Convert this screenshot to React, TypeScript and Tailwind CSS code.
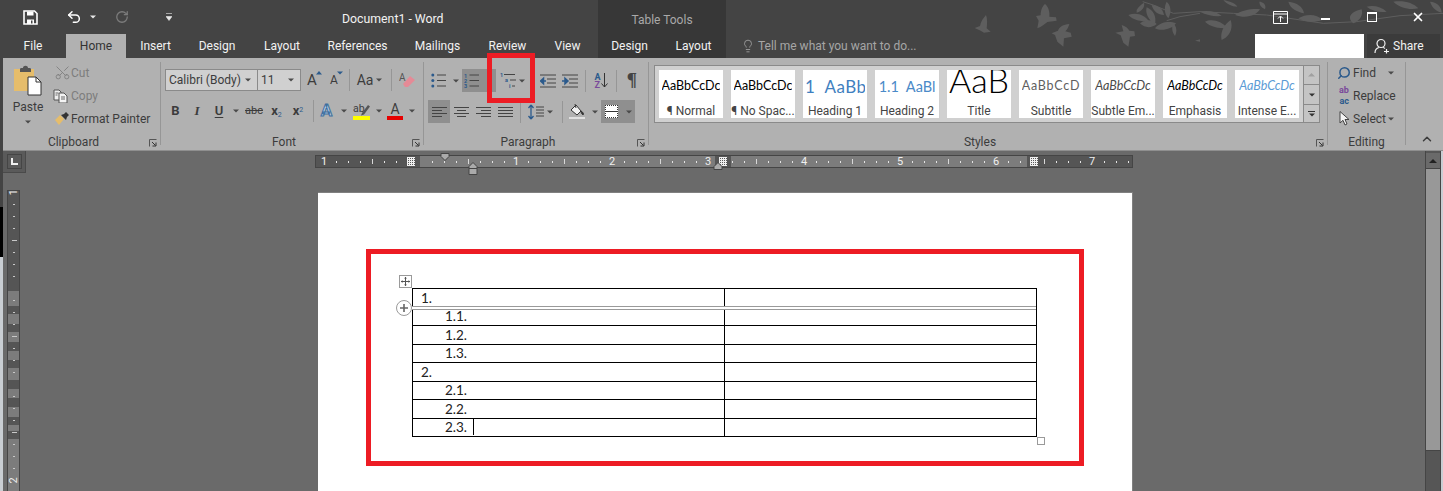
import { ReactNode } from 'react'
import { Lightbulb, RotateCw, Scissors, Undo2, X, Search, ChevronUp } from 'lucide-react'

const leftTabs = [
  { label: 'File', w: 'w-[66px]' },
  { label: 'Home', w: 'w-[60px]' },
  { label: 'Insert', w: 'w-[59px]' },
  { label: 'Design', w: 'w-[64px]' },
  { label: 'Layout', w: 'w-[66px]' },
  { label: 'References', w: 'w-[85px]' },
  { label: 'Mailings', w: 'w-[75px]' },
  { label: 'Review', w: 'w-[65px]' },
  { label: 'View', w: 'w-[55px]' },
]

const Caret = ({ color = '#4a4a4a' }: { color?: string }) => (
  <svg width="6" height="4" viewBox="0 0 6 4"><path d="M0 0.5h6L3 3.5z" fill={color} /></svg>
)

const Launcher = () => (
  <svg width="12" height="9" viewBox="0 0 12 9" className="shrink-0">
    <path d="M1.5 8.5v-7h7" fill="none" stroke="#555" />
    <path d="M4 4l3.5 3.5M8 4.5v3.5h-3.5" fill="none" stroke="#333" />
  </svg>
)

const Sep = ({ h = 'h-[22px]' }: { h?: string }) => <div className={'w-px bg-[#969696] ' + h} />

const Cell = ({ w, children, on }: { w: string; children?: ReactNode; on?: boolean }) => (
  <div className={'flex h-full items-center justify-center ' + w + (on ? ' bg-[#8f8f8f]' : '')}>{children}</div>
)

const Group = ({ w, label, launcher = true, children }: { w: string; label: string; launcher?: boolean; children: ReactNode }) => (
  <div className={'flex shrink-0 flex-col ' + w}>
    <div className="flex h-[76px] flex-col">{children}</div>
    <div className="flex h-[16px] items-center text-[12px] text-[#3c3c3c]">
      <span className={'flex-1 text-center' + (launcher ? ' pr-[4px]' : '')}>{label}</span>
      {launcher && <Launcher />}
    </div>
  </div>
)

const GroupSep = () => <div className="mt-[4px] h-[83px] w-px shrink-0 bg-[#969696]" />

const Bullets = () => (
  <svg width="15" height="15" viewBox="0 0 15 15">
    <circle cx="1.8" cy="2" r="1.5" fill="#2b5a8c" /><circle cx="1.8" cy="7.5" r="1.5" fill="#2b5a8c" /><circle cx="1.8" cy="13" r="1.5" fill="#2b5a8c" />
    <path d="M6 2h9M6 7.5h9M6 13h9" stroke="#444" />
  </svg>
)

const Numbers = () => (
  <svg width="15" height="15" viewBox="0 0 15 15">
    <text x="0" y="5" fontSize="5.5" fill="#2b5a8c" fontWeight="700" fontFamily="Roboto">1</text>
    <text x="0" y="10" fontSize="5.5" fill="#2b5a8c" fontWeight="700" fontFamily="Roboto">2</text>
    <text x="0" y="15" fontSize="5.5" fill="#2b5a8c" fontWeight="700" fontFamily="Roboto">3</text>
    <path d="M5.5 2h9.5M5.5 7.5h9.5M5.5 13h9.5" stroke="#444" />
  </svg>
)

const Multilevel = () => (
  <svg width="17" height="17" viewBox="0 0 17 17">
    <text x="0" y="5" fontSize="5.5" fill="#2b5a8c" fontWeight="700" fontFamily="Roboto">1</text>
    <text x="5" y="10" fontSize="5.5" fill="#2b5a8c" fontWeight="700" fontFamily="Roboto">a</text>
    <text x="9" y="16" fontSize="5.5" fill="#2b5a8c" fontWeight="700" fontFamily="Roboto">i</text>
    <path d="M4 2.5h11M10 8h6M12 14h3" stroke="#444" />
  </svg>
)

const IndentIcon = ({ flip }: { flip?: boolean }) => (
  <svg width="16" height="14" viewBox="0 0 16 14">
    <path d="M0 1h16M7 5h9M7 9h9M0 13h16" stroke="#444" />
    {flip
      ? <path d="M0 7h3.5M3 4.2l3 2.8-3 2.8z" stroke="#2b5a8c" fill="#2b5a8c" strokeWidth="1.5" />
      : <path d="M6 7h-3M3.5 4.2l-3 2.8 3 2.8z" stroke="#2b5a8c" fill="#2b5a8c" strokeWidth="1.5" />}
  </svg>
)

const Align = ({ d }: { d: string }) => (
  <svg width="15" height="12" viewBox="0 0 15 12"><path d={d} stroke="#444" fill="none" /></svg>
)

const styleItems = [
  { label: '¶ Normal', text: 'AaBbCcDc', cls: 'text-[12.5px] text-black' },
  { label: '¶ No Spac...', text: 'AaBbCcDc', cls: 'text-[12.5px] text-black' },
  { label: 'Heading 1', text: '1  AaBb', cls: 'text-[17px] text-[#3f7fbf] tracking-[0.5px]' },
  { label: 'Heading 2', text: '1.1  AaBl', cls: 'text-[14.5px] text-[#4a8ac8]' },
  { label: 'Title', text: 'AaB', cls: 'text-[34px] text-black leading-[26px] -mt-[14px] font-light' },
  { label: 'Subtitle', text: 'AaBbCcD', cls: 'text-[12.5px] text-[#5f5f5f] tracking-[0.8px]' },
  { label: 'Subtle Em...', text: 'AaBbCcDc', cls: 'text-[12.5px] italic text-[#4a4a4a]' },
  { label: 'Emphasis', text: 'AaBbCcDc', cls: 'text-[12.5px] italic text-black' },
  { label: 'Intense E...', text: 'AaBbCcDc', cls: 'text-[12.5px] italic text-[#5b9bd5]' },
]

const rulerCells = Array.from({ length: 68 }, (_, i) => i - 8)

const RulerMark = ({ k }: { k: number }) => {
  if (k === 0) return null
  if (k % 8 === 0) return <span className="text-[11px] leading-none text-[#f0f0f0]">{Math.abs(k / 8)}</span>
  if (k % 4 === 0) return <div className="h-[5px] w-px bg-[#d8d8d8]" />
  return <div className="h-[2px] w-px bg-[#e4e4e4]" />
}

const GridMark = () => (
  <svg width="8" height="9" viewBox="0 0 8 9" shapeRendering="crispEdges">
    <rect width="8" height="9" fill="#5a5a5a" />
    <path d="M.5 0v9M2.5 0v9M4.5 0v9M6.5 0v9M0 .5h8M0 2.5h8M0 4.5h8M0 6.5h8M0 8.5h8" stroke="#f0f0f0" />
  </svg>
)

const vSegments = [
  { h: 'h-[100px]', on: false }, { h: 'h-[15px]', on: true }, { h: 'h-[8px]', on: false }, { h: 'h-[10px]', on: true },
  { h: 'h-[8px]', on: false }, { h: 'h-[10px]', on: true }, { h: 'h-[9px]', on: false }, { h: 'h-[9px]', on: true },
  { h: 'h-[8px]', on: false }, { h: 'h-[12px]', on: true }, { h: 'h-[9px]', on: false }, { h: 'h-[9px]', on: true },
  { h: 'h-[9px]', on: false }, { h: 'h-[10px]', on: true }, { h: 'h-[8px]', on: false }, { h: 'h-[6px]', on: true },
  { h: 'h-[8px]', on: false }, { h: 'h-[53px]', on: true },
]

const rows = [
  { n: '1.', sub: false, h: 'h-[19px]' },
  { n: '1.1.', sub: true, h: 'h-[18px]' },
  { n: '1.2.', sub: true, h: 'h-[19px]' },
  { n: '1.3.', sub: true, h: 'h-[18px]' },
  { n: '2.', sub: false, h: 'h-[19px]' },
  { n: '2.1.', sub: true, h: 'h-[18px]' },
  { n: '2.2.', sub: true, h: 'h-[19px]' },
  { n: '2.3.', sub: true, h: 'h-[18px]' },
]

// birds and branch in the title bar, drawn in 3x units
const Decor = () => (
  <svg width="483" height="58" viewBox="0 0 1449 174" className="pointer-events-none absolute right-0 top-0" fill="#5e5e5e">
    <path d="M78 45C70 55 62 65 60 78L44 84l18 8 10 6 20-3-12-10C82 70 82 55 78 45z" />
    <path d="M255 12C245 20 242 35 242 46l-14 2 8 14-4 23c13-5 23-13 30-19l28-4-2-10-20-2C270 35 265 20 255 12z" />
    <path d="M328 72C310 74 298 80 294 92l-19 8 10 5 7 20 18 15 2-25 23-5-3-12-16-4C322 88 326 80 328 72z" />
    <path d="M485 75l5 19-24 4 16 8 8 22 15 12 5-30 15-2-2-14-15-2C505 85 495 78 485 75z" />
    <path d="M505 45c25-10 50 0 63 20-28 0-48-5-63-20zM530 30c5-10 15-18 22-22 3 12-4 24-22 30zM540 70c20-15 40-10 50 2-15 13-35 13-50-2zM560 22c20 8 30 28 25 50-20-12-30-32-25-50zM575 15c20 0 35 13 37 30-17 0-32-10-37-30zM620 5c12 10 16 30 5 50-13-15-13-35-5-50zM585 85c15-20 45-23 63-15-13 18-43 25-63 15zM640 70c10 10 12 25 5 38-10-13-10-28-5-38zM705 122l15 3v-7z" />
    <path d="M548 5l32 10 60 25 80-5M620 62l40-12 60-10" fill="none" stroke="#5e5e5e" strokeWidth="3" />
    <g transform="translate(720)">
      <path d="M70 0c20 5 35 8 42 20-17 0-32-8-42-20zM105 45c20-15 55-20 75-17-10 17-40 30-75 17zM178 5c12 0 22 10 17 23-12-6-17-13-17-23zM65 120c-5-20 5-45 27-60 8 25-2 50-27 60zM15 65c20-10 50-3 67 20-27 0-52-5-67-20zM0 35c25-5 50 0 65 13-25 2-45-3-65-13zM265 5c25 3 45 15 47 35-22-5-42-15-47-35zM295 55c25-15 55-13 73 5-23 8-53 8-73-5zM460 70c-20-15-10-35 25-42 5 17-5 34-25 42zM580 5c30-5 60 3 75 20-25 5-55 0-75-20zM690 5c20 0 35 15 35 33-20-6-30-18-35-33zM500 20c20-5 45 0 60 15-25 3-45-3-60-15z" />
      <path d="M0 35l100 5 100 5 170 25 100-5 130-18 130-7" fill="none" stroke="#5e5e5e" strokeWidth="3" />
    </g>
  </svg>
)

export default function App() {
  return (
    <div className="relative flex h-[491px] w-[1443px] flex-col overflow-hidden bg-[#444444] font-['Roboto',sans-serif] text-[12px]">
      {/* title bar + tabs */}
      <div className="relative flex h-[58px] shrink-0 text-[#f2f2f2]">
        <Decor />
        <div className="relative w-[598px] shrink-0">
          <div className="flex h-[34px] items-center">
            <svg width="15" height="15" viewBox="0 0 15 15" className="ml-[23px]">
              <path d="M1 1h10.5L14 3.5V14H1z" fill="none" stroke="#fff" strokeWidth="1.6" />
              <path d="M4 1.5h6.5v4H4zM4 9.5h7V14H4z" fill="#fff" />
              <path d="M8 10.5h1.5v3H8z" fill="#444" />
            </svg>
            <Undo2 size={16} strokeWidth={2.2} className="ml-[28px] text-white" />
            <div className="ml-[8px]"><Caret color="#e8e8e8" /></div>
            <RotateCw size={14} strokeWidth={2.2} className="ml-[19px] text-[#7c7c7c]" />
            <svg width="6" height="8" viewBox="0 0 6 8" className="ml-[37px]"><path d="M0 0.5h6M0 3.5h6L3 7.5z" stroke="#e8e8e8" fill="#e8e8e8" strokeWidth="0.6" /></svg>
            <span className="ml-[170px] mt-[5px] text-[12.3px] leading-none">Document1 - Word</span>
          </div>
          <div className="flex h-[24px]">
            {leftTabs.map((t) => (
              <div
                key={t.label}
                className={'flex items-center justify-center ' + t.w + (t.label === 'Home' ? ' bg-[#b1b1b1] text-[#333333]' : '')}
              >
                {t.label}
              </div>
            ))}
          </div>
        </div>
        <div className="relative w-[128px] shrink-0 bg-[#373737]">
          <div className="flex h-[34px] items-center justify-center pt-[5px] text-[#a9a9a9]">Table Tools</div>
          <div className="flex h-[24px]">
            <div className="flex w-[63px] items-center justify-center">Design</div>
            <div className="flex w-[65px] items-center justify-center">Layout</div>
          </div>
        </div>
        <div className="relative flex-1">
          <div className="flex h-[34px] items-center">
            <svg width="15" height="13" viewBox="0 0 15 13" className="ml-[547px]">
              <path d="M0.5 0.5h14v12h-14zM0.5 3h14" stroke="#fff" fill="none" />
              <path d="M7.5 11V5.5M5 7.5l2.5-2.5 2.5 2.5" stroke="#fff" fill="none" />
            </svg>
            <div className="ml-[33px] mt-[3px] h-[2px] w-[9px] bg-white" />
            <div className="ml-[37px] h-[10px] w-[10px] border border-t-2 border-white" />
            <X size={14} strokeWidth={3} className="ml-[34px] text-white" />
          </div>
          <div className="flex h-[24px]">
            <div className="flex w-[529px] items-center text-[#a6a6a6]">
              <Lightbulb size={14} strokeWidth={1.4} className="ml-[15px]" />
              <span className="ml-[3px]">Tell me what you want to do...</span>
            </div>
            <div className="w-[109px] bg-white" />
            <div className="ml-[3px] flex w-[73px] items-center bg-[#3b3b3b]">
              <svg width="16" height="16" viewBox="0 0 16 16" className="ml-[7px]">
                <circle cx="7" cy="5.5" r="4" fill="none" stroke="#f2f2f2" strokeWidth="1.2" />
                <path d="M1 15c0-3 2-5 4-5.500M9 9.5c.8.2 1.5.5 2 1M12.5 11v4.500M10 13.5h5" stroke="#f2f2f2" strokeWidth="1.2" fill="none" />
              </svg>
              <span className="ml-[3px]">Share</span>
            </div>
          </div>
        </div>
      </div>

      {/* ribbon */}
      <div className="ml-[3px] flex h-[93px] shrink-0 border-b border-[#8f8f8f] bg-[#b1b1b1] text-[#3c3c3c]">
        <Group w="w-[157px]" label="Clipboard">
          <div className="flex">
            <div className="ml-[7px] flex w-[36px] flex-col items-center pt-[7px]">
              <svg width="30" height="31" viewBox="0 0 30 31">
                <path d="M1 4h20v22H1z" fill="#e6bd6b" />
                <path d="M7 4c0-1 1-1 2-1h1c0-3 5-3 5 0h1c1 0 2 0 2 1v3H7z" fill="#555" />
                <path d="M15 12h8l5 5v13H15z" fill="#fff" stroke="#333" />
                <path d="M23 12v5h5" fill="none" stroke="#333" />
              </svg>
              <span className="mt-[3px] leading-[16px]">Paste</span>
              <div className="mt-[5px]"><Caret /></div>
            </div>
            <div className="ml-[7px] mt-[3px] flex flex-col">
              <div className="flex h-[23px] items-center text-[#7d7d7d]">
                <div className="flex w-[18px] justify-center"><Scissors size={17} strokeWidth={1.2} className="-rotate-90" /></div>
                <span>Cut</span>
              </div>
              <div className="flex h-[23px] items-center text-[#7d7d7d]">
                <div className="flex w-[18px] justify-start">
                  <svg width="15" height="14" viewBox="0 0 15 14">
                    <path d="M1 1h5l2 2v8H1z" fill="#eee" stroke="#555" />
                    <path d="M6 4h5l3 3v7H6z" fill="#f4f4f4" stroke="#555" />
                    <path d="M2.5 4h3M2.5 6h2M8 8h4M8 10h4" stroke="#666" />
                  </svg>
                </div>
                <span>Copy</span>
              </div>
              <div className="flex h-[23px] items-center">
                <div className="flex w-[18px] justify-center">
                  <svg width="16" height="14" viewBox="0 0 16 14">
                    <path d="M1 8l5-5 4 4-5 6z" fill="#e6bd6b" />
                    <path d="M7 3l3-1 2-2 3 3-2 2-1 3z" fill="#333" />
                  </svg>
                </div>
                <span className="whitespace-nowrap">Format Painter</span>
              </div>
            </div>
          </div>
        </Group>
        <GroupSep />
        <Group w="w-[262px]" label="Font">
          <div className="ml-[4px] mt-[11px] flex h-[22px] items-center">
            <div className="flex h-[22px] w-[93px] items-center justify-between border border-[#8a8a8a] bg-[#d0d0d0] pl-[3px] pr-[6px]">
              <span className="whitespace-nowrap">Calibri (Body)</span><Caret />
            </div>
            <div className="flex h-[22px] w-[43px] items-center justify-between border border-l-0 border-[#8a8a8a] bg-[#d0d0d0] pl-[3px] pr-[6px] text-[12px]">
              <span>11</span><Caret />
            </div>
            <Cell w="w-[22px]">
              <span className="relative text-[15px]">A<svg width="6" height="4" viewBox="0 0 6 4" className="absolute -right-[5px] top-[2px]"><path d="M0 3.5h6L3 0z" fill="#2b5a8c" /></svg></span>
            </Cell>
            <Cell w="w-[22px]">
              <span className="relative text-[12px]">A<svg width="6" height="4" viewBox="0 0 6 4" className="absolute -right-[5px] top-[0px]"><path d="M0 0.5h6L3 3.5z" fill="#2b5a8c" /></svg></span>
            </Cell>
            <Cell w="w-[4px]" />
            <Sep />
            <Cell w="w-[26px]"><span className="ml-[4px] text-[14px]">Aa</span></Cell>
            <Cell w="w-[6px]"><Caret /></Cell>
            <Cell w="w-[9px]" />
            <Sep />
            <Cell w="w-[30px]">
              <svg width="16" height="16" viewBox="0 0 16 16">
                <text x="0" y="9" fontSize="10" fill="#555" fontFamily="Roboto">A</text>
                <path d="M4 12l7-8 5 4-7 7H6z" fill="#e58a96" />
              </svg>
            </Cell>
          </div>
          <div className="ml-[4px] mt-[9px] flex h-[22px] items-center">
            <Cell w="w-[21px]"><b className="text-[13px]">B</b></Cell>
            <Cell w="w-[22px]"><i className="font-['Liberation_Serif',serif] text-[13px] font-bold">I</i></Cell>
            <Cell w="w-[22px]"><b className="text-[13px] font-semibold underline underline-offset-2">U</b></Cell>
            <Cell w="w-[12px]"><Caret /></Cell>
            <Cell w="w-[24px]"><span className="text-[11px] line-through">abc</span></Cell>
            <Cell w="w-[21px]"><b className="text-[13px]">x<sub className="text-[7px] font-normal text-[#2b5a8c]">2</sub></b></Cell>
            <Cell w="w-[22px]"><b className="text-[13px]">x<sup className="text-[7px] font-normal text-[#2b5a8c]">2</sup></b></Cell>
            <Cell w="w-[4px]" />
            <Sep />
            <Cell w="w-[25px]"><span className="text-[17px] font-bold text-[#b9cfe6] [-webkit-text-stroke:1px_#3f6f9f]">A</span></Cell>
            <Cell w="w-[10px]"><Caret /></Cell>
            <Cell w="w-[24px]">
              <svg width="17" height="18" viewBox="0 0 17 18">
                <text x="0" y="10" fontSize="10.5" fill="#3c3c3c" fontFamily="Roboto">ab</text>
                <path d="M9 11l6-8 2 1.5-6 8-3 1z" fill="#555" />
                <rect y="14" width="17" height="4" fill="#ffff00" />
              </svg>
            </Cell>
            <Cell w="w-[12px]"><Caret /></Cell>
            <Cell w="w-[20px]">
              <div className="flex flex-col items-center">
                <span className="text-[14px] leading-[13px]">A</span>
                <div className="h-[4px] w-[16px] bg-[#e60000]" />
              </div>
            </Cell>
            <Cell w="w-[14px]"><Caret /></Cell>
          </div>
        </Group>
        <GroupSep />
        <Group w="w-[224px]" label="Paragraph">
          <div className="ml-[4px] mt-[11px] flex h-[23px] items-center">
            <Cell w="w-[21px]"><Bullets /></Cell>
            <Cell w="w-[13px]"><Caret /></Cell>
            <Cell w="w-[34px]" on><div className="mr-[15px]"><Numbers /></div></Cell>
            <Cell w="w-[22px]"><div className="ml-[2px]"><Multilevel /></div></Cell>
            <Cell w="w-[8px]"><Caret /></Cell>
            <Cell w="w-[14px]" />
            <IndentIcon />
            <Cell w="w-[6px]" />
            <IndentIcon flip />
            <Cell w="w-[7px]" />
            <Sep />
            <Cell w="w-[30px]"><span className="flex items-center">
              <span className="flex flex-col text-[9px] font-bold leading-[8px]"><span className="text-[#2b5a8c]">A</span><span className="text-[#7a4a9a]">Z</span></span>
              <svg width="7" height="15" viewBox="0 0 7 15"><path d="M3.5 0v14M0.5 10.5l3 3.5 3-3.5" fill="none" stroke="#333" /></svg>
            </span></Cell>
            <Sep />
            <Cell w="w-[30px]"><span className="font-['Liberation_Serif',serif] text-[19px] font-bold text-[#444]">¶</span></Cell>
          </div>
          <div className="ml-[4px] mt-[8px] flex h-[23px] items-center">
            <Cell w="w-[22px]" on><Align d="M0 1.5h15M0 4.5h10M0 7.5h15M0 10.5h10" /></Cell>
            <Cell w="w-[22px]"><Align d="M0 1.5h15M3 4.5h9M0 7.5h15M3 10.5h9" /></Cell>
            <Cell w="w-[22px]"><Align d="M0 1.5h15M5 4.5h10M0 7.5h15M5 10.5h10" /></Cell>
            <Cell w="w-[22px]"><Align d="M0 1.5h15M0 4.5h15M0 7.5h15M0 10.5h15" /></Cell>
            <Cell w="w-[4px]" />
            <Sep />
            <Cell w="w-[24px]">
              <svg width="16" height="16" viewBox="0 0 16 16" className="ml-[5px]">
                <path d="M3 1l-2.5 3M3 1l2.5 3M3 1v14M3 15l-2.5-3M3 15l2.5-3" stroke="#2b5a8c" fill="none" strokeWidth="1.3" />
                <path d="M8 3h8M8 6h8M8 9h8M8 12h8" stroke="#444" />
              </svg>
            </Cell>
            <Cell w="w-[10px]"><Caret /></Cell>
            <Cell w="w-[7px]" />
            <Sep />
            <Cell w="w-[28px]">
              <svg width="16" height="17" viewBox="0 0 16 17">
                <path d="M2 7l5-5 5 6-4 4z" fill="#f2f2f2" stroke="#333" />
                <path d="M6 1l1 4M12 8c2 1 3 3 2 4-1-1-2-2-2-4z" stroke="#333" fill="#333" />
                <rect y="14" width="16" height="2" fill="#e0e0e0" />
              </svg>
            </Cell>
            <Cell w="w-[7px]"><Caret /></Cell>
            <Cell w="w-[3px]" />
            <Cell w="w-[34px]" on>
              <div className="mr-[8px] flex h-[13px] w-[13px] items-center justify-center bg-white">
                <div className="h-[13px] w-[13px] border border-dotted border-[#333] bg-[linear-gradient(#333,#333)] bg-[length:100%_1px] bg-center bg-no-repeat" />
              </div>
              <Caret />
            </Cell>
          </div>
        </Group>
        <GroupSep />
        <Group w="w-[678px]" label="Styles">
          <div className="ml-[5px] mt-[7px] flex h-[58px]">
            <div className="flex h-[58px] w-[650px] gap-[8px] border border-[#8a8a8a] bg-[#d0d0d0] py-[4px] pl-[4px]">
              {styleItems.map((s) => (
                <div key={s.label} className="flex h-[48px] w-[64px] shrink-0 flex-col overflow-hidden bg-white">
                  <div className="flex h-[33px] items-center justify-center overflow-hidden whitespace-nowrap px-[2px] font-['Lato',sans-serif]">
                    <span className={'block overflow-hidden whitespace-pre ' + s.cls}>{s.text}</span>
                  </div>
                  <div className="flex h-[15px] items-center justify-center whitespace-nowrap text-[12px] leading-none text-[#444]">{s.label}</div>
                </div>
              ))}
            </div>
            <div className="flex w-[16px] flex-col border border-l-0 border-[#8a8a8a] bg-[#c4c4c4]">
              <div className="flex h-[19px] items-center justify-center border-b border-[#8a8a8a]"><svg width="7" height="4" viewBox="0 0 7 4"><path d="M0 3.5h7L3.5 0z" fill="#a0a0a0" /></svg></div>
              <div className="flex h-[20px] items-center justify-center border-b border-[#8a8a8a]"><Caret color="#333" /></div>
              <div className="flex flex-1 flex-col items-center justify-center gap-[1px]"><div className="h-px w-[7px] bg-[#333]" /><Caret color="#333" /></div>
            </div>
          </div>
        </Group>
        <GroupSep />
        <Group w="w-[77px]" label="Editing" launcher={false}>
          <div className="ml-[7px] mt-[3px] flex flex-col">
            <div className="flex h-[23px] items-center">
              <div className="flex w-[18px] justify-center"><Search size={14} strokeWidth={2.6} className="-scale-x-100 text-[#2b5a8c]" /></div>
              <span>Find</span>
              <div className="ml-[12px]"><Caret /></div>
            </div>
            <div className="flex h-[23px] items-center">
              <div className="flex w-[18px] justify-center text-[9px] font-bold leading-[10.5px] text-[#2b5a8c]">
                <span className="flex flex-col items-end"><span className="text-[#7a4a9a]">ab</span><span>ac</span></span>
              </div>
              <span>Replace</span>
            </div>
            <div className="flex h-[23px] items-center">
              <div className="flex w-[18px] justify-center">
                <svg width="11" height="15" viewBox="0 0 11 15"><path d="M1 .5v11.5l3-2.7 2 4.7 2-1-2-4.5h4z" fill="#f4f4f4" stroke="#444" /></svg>
              </div>
              <span>Select</span>
              <div className="ml-[2px]"><Caret /></div>
            </div>
          </div>
        </Group>
        <GroupSep />
        <div className="flex flex-1 items-end justify-center pb-[1px] pr-[2px]"><ChevronUp size={14} strokeWidth={2.5} className="mb-[3px] ml-[6px] text-[#3c3c3c]" /></div>
      </div>

      {/* document area */}
      <div className="flex min-h-0 flex-1 bg-[#6a6a6a]">
        <div className="flex w-[3px] shrink-0 flex-col bg-[#c9ced3]">
          <div className="h-[56px] bg-[#444]" />
          <div className="h-[50px] bg-black" />
        </div>
        <div className="w-[312px] shrink-0">
          <div className="flex h-[22px] w-[23px] items-center justify-center border-b border-r border-[#4a4a4a] bg-[#5a5a5a]">
            <div className="flex h-[15px] w-[15px] items-center justify-center border border-[#454545]">
              <div className="mb-[1px] h-[7px] w-[7px] border-b-2 border-l-2 border-[#f0f0f0]" />
            </div>
          </div>
          <div className="relative ml-[4px] mt-[17px] w-[13px] overflow-hidden border-x border-t border-[#454545]">
            {vSegments.map((s, i) => (
              <div key={i} className={s.h + (s.on ? ' bg-[#7c7c7c]' : ' bg-[#555555]')} />
            ))}
            <div className="absolute -top-[5px] left-0 flex w-full flex-col">
              {Array.from({ length: 25 }, (_, k) => (
                <div key={k} className="flex h-[12px] items-center justify-center">
                  {k === 0 || k === 24 ? (
                    <span className="-rotate-90 text-[11px] leading-none text-[#f0f0f0]">{k === 0 ? 1 : 2}</span>
                  ) : k % 8 === 4 ? (
                    <div className="ml-[1px] h-px w-[5px] bg-[#c8c8c8]" />
                  ) : k % 8 === 0 ? null : (
                    <div className="ml-[1px] h-px w-[2px] bg-[#c8c8c8]" />
                  )}
                </div>
              ))}
            </div>
          </div>
        </div>

        <div className="flex w-[818px] shrink-0 flex-col pt-[4px]">
          <div className="relative h-[13px] w-[818px] border border-[#454545]">
            <div className="flex h-full">
              <div className="w-[104px] bg-[#555555]" />
              <div className="w-[295px] bg-[#7c7c7c]" />
              <div className="w-[16px] bg-[#555555]" />
              <div className="w-[296px] bg-[#7c7c7c]" />
              <div className="flex-1 bg-[#555555]" />
            </div>
            <div className="absolute left-[2px] top-0 flex h-full">
              {rulerCells.map((k) => (
                <div key={k} className="flex h-full w-[12px] items-center justify-center"><RulerMark k={k} /></div>
              ))}
            </div>
            <div className="absolute left-[91px] top-[1px]"><GridMark /></div>
            <div className="absolute left-[403px] top-[1px]"><GridMark /></div>
            <div className="absolute left-[714px] top-[1px]"><GridMark /></div>
            <svg width="10" height="8" viewBox="0 0 10 8" className="absolute left-[124px] -top-[3px]"><path d="M1 .5h8v3L5 7.5 1 3.5z" fill="#aaa" stroke="#444" /></svg>
            <svg width="10" height="13" viewBox="0 0 10 13" className="absolute left-[152px] top-[6px]"><path d="M1 4.5L5 .5l4 4v2H1z" fill="#aaa" stroke="#444" /><path d="M1 6.5h8v6H1z" fill="#aaa" stroke="#444" /></svg>
            <svg width="10" height="8" viewBox="0 0 10 8" className="absolute left-[397px] top-[6px]"><path d="M1 7.5v-3L5 .5l4 4v3z" fill="#aaa" stroke="#444" /></svg>
          </div>
          <div className="relative ml-[3px] mt-[24px] flex-1 border-r border-t border-[#808080] bg-white pl-[94px] pt-[95px]">
            <table className="w-[624px] table-fixed border-collapse font-['Lato',sans-serif] text-[13.5px] text-[#222]">
              <colgroup>
                <col className="w-[312px]" />
                <col className="w-[312px]" />
              </colgroup>
              <tbody>
                {rows.map((r) => (
                  <tr key={r.n} className={r.h}>
                    <td className={'border border-black p-0 pt-[1px] leading-none ' + (r.sub ? 'pl-[32px]' : 'pl-[8px]')}>
                      <span className="relative">
                        {r.n}
                        {r.n === '2.3.' && <span className="absolute -right-[7px] -top-[1px] h-[17px] w-px bg-black" />}
                      </span>
                    </td>
                    <td className="border border-black p-0" />
                  </tr>
                ))}
              </tbody>
            </table>
            {/* word's table handles */}
            <div className="absolute left-[81px] top-[82px] flex h-[13px] w-[13px] items-center justify-center border border-[#9a9a9a] bg-white">
              <svg width="9" height="9" viewBox="0 0 9 9">
                <path d="M4.5 0v9M0 4.5h9" stroke="#555" />
                <path d="M3 1.5h3L4.5 0zM3 7.5h3L4.5 9zM1.5 3v3L0 4.5zM7.5 3v3L9 4.5z" fill="#555" />
              </svg>
            </div>
            <div className="absolute left-[94px] top-[113px] h-[4px] w-[624px] border-y border-[#9a9a9a] bg-white" />
            <div className="absolute left-[78px] top-[107px] flex h-[16px] w-[16px] items-center justify-center rounded-full border border-[#9a9a9a] bg-white">
              <svg width="8" height="8" viewBox="0 0 8 8"><path d="M4 0v8M0 4h8" stroke="#666" strokeWidth="1.6" /></svg>
            </div>
            <div className="absolute left-[719px] top-[244px] h-[8px] w-[8px] border border-[#9a9a9a] bg-white" />
            {/* red annotation */}
            <div className="absolute left-[48px] top-[56px] h-[217px] w-[718px] border-[5px] border-[#ed1c24]" />
          </div>
        </div>

        <div className="flex-1" />
        <div className="flex w-[16px] shrink-0 flex-col border-x border-[#454545] bg-[#565656] pt-[2px]">
          <div className="flex h-[15px] items-center justify-center bg-[#6a6a6a]"><svg width="8" height="4" viewBox="0 0 8 4"><path d="M0 4h8L4 0z" fill="#222" /></svg></div>
          <div className="h-[283px] border-y border-[#454545] bg-[#989898]" />
        </div>
        <div className="w-[2px] shrink-0 bg-[#c9ced3]" />
      </div>

      {/* red annotation around the multilevel list button */}
      <div className="absolute left-[487px] top-[53px] h-[50px] w-[48px] border-[5px] border-[#ed1c24]" />
    </div>
  )
}
